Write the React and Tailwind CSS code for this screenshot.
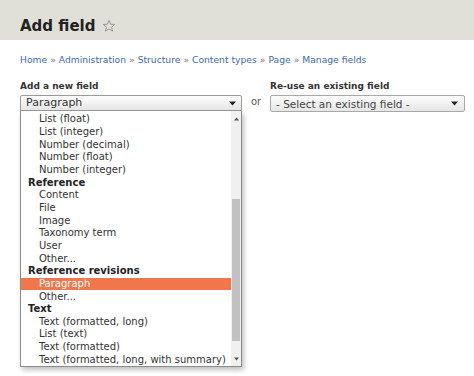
import React from "react";

const font = { fontFamily: '"DejaVu Sans", Verdana, sans-serif' };

const rows = [
  { t: "List (float)" },
  { t: "List (integer)" },
  { t: "Number (decimal)" },
  { t: "Number (float)" },
  { t: "Number (integer)" },
  { t: "Reference", g: true },
  { t: "Content" },
  { t: "File" },
  { t: "Image" },
  { t: "Taxonomy term" },
  { t: "User" },
  { t: "Other..." },
  { t: "Reference revisions", g: true },
  { t: "Paragraph", sel: true },
  { t: "Other..." },
  { t: "Text", g: true },
  { t: "Text (formatted, long)" },
  { t: "List (text)" },
  { t: "Text (formatted)" },
  { t: "Text (formatted, long, with summary)" },
];

function Arrow({ className }) {
  return (
    <svg width="7" height="5" viewBox="0 0 7 5" className={className}>
      <path d="M0 0.5 L7 0.5 L3.5 4.5 Z" fill="#222" />
    </svg>
  );
}

function Crumb({ children, last }) {
  return (
    <>
      <span className="text-[#3b6bb3]">{children}</span>
      {!last && <span className="text-[#777] px-[3px]">»</span>}
    </>
  );
}

export default function App() {
  return (
    <div className="w-[474px] h-[376px] bg-white overflow-hidden" style={font}>
      <div className="h-[40px] bg-[#e0e0d8] px-[20px] pt-[18px] flex items-start">
        <span className="text-[15px] leading-[16px] font-bold text-[#222]">Add field</span>
        <svg width="14" height="14" viewBox="0 0 24 24" className="ml-[7px] mt-[1px]">
          <path
            d="M12 2.5 L14.8 9 L21.8 9.4 L16.4 13.9 L18.2 20.8 L12 17 L5.8 20.8 L7.6 13.9 L2.2 9.4 L9.2 9 Z"
            fill="none"
            stroke="#8a8a84"
            strokeWidth="1.4"
            strokeLinejoin="round"
          />
        </svg>
      </div>
      <div className="px-[20px] pt-[14px] text-[9.2px] leading-[12px] whitespace-nowrap">
        <Crumb>Home</Crumb>
        <Crumb>Administration</Crumb>
        <Crumb>Structure</Crumb>
        <Crumb>Content types</Crumb>
        <Crumb>Page</Crumb>
        <Crumb last>Manage fields</Crumb>
      </div>
      <div className="flex pl-[20px] pt-[15px]">
        <div className="w-[222px] shrink-0 flex flex-col">
          <div className="text-[9px] leading-[11px] font-bold text-[#333] h-[14px]">Add a new field</div>
          <div className="h-[16px] border border-[#9a9a9a] rounded-t-[2px] bg-gradient-to-b from-[#fdfdfd] to-[#e6e6e6] flex items-center pl-[5px] pr-[5px]">
            <span className="text-[11px] leading-[14px] text-[#333] flex-1">Paragraph</span>
            <Arrow />
          </div>
          <div className="h-[256px] border border-t-0 border-[#8c8c8c] bg-white flex shadow-[2px_3px_5px_rgba(0,0,0,0.25)]">
            <div className="flex-1 pt-[2px] overflow-hidden">
              {rows.map((r, i) => (
                <div
                  key={i}
                  className={
                    "h-[12.66px] flex items-center whitespace-nowrap text-[10px] leading-[12px] " +
                    (r.g ? "pl-[7px] font-bold text-[#222] " : "pl-[18px] text-[#333] ") +
                    (r.sel ? "bg-[#f0774b] text-white" : "")
                  }
                >
                  {r.t}
                </div>
              ))}
            </div>
            <div className="w-[10px] bg-[#f0f0f0] flex flex-col items-center">
              <svg width="5" height="4" viewBox="0 0 5 4" className="mt-[6px]">
                <path d="M0 3.5 L5 3.5 L2.5 0.5 Z" fill="#555" />
              </svg>
              <div className="mt-[78px] w-[8px] h-[142px] bg-[#c1c1c1]" />
              <div className="flex-1" />
              <svg width="5" height="4" viewBox="0 0 5 4" className="mb-[5px]">
                <path d="M0 0.5 L5 0.5 L2.5 3.5 Z" fill="#555" />
              </svg>
            </div>
          </div>
        </div>
        <div className="w-[28px] shrink-0 pt-[14px] flex justify-center">
          <span className="text-[10px] leading-[14px] text-[#555]">or</span>
        </div>
        <div className="w-[195px] shrink-0 flex flex-col">
          <div className="text-[9px] leading-[11px] font-bold text-[#333] h-[14px]">Re-use an existing field</div>
          <div className="h-[17px] border border-[#a8a8a8] rounded-[2px] bg-gradient-to-b from-[#fdfdfd] to-[#e6e6e6] flex items-center pl-[5px] pr-[6px]">
            <span className="text-[10.5px] leading-[14px] text-[#444] flex-1">- Select an existing field -</span>
            <Arrow />
          </div>
        </div>
      </div>
    </div>
  );
}
